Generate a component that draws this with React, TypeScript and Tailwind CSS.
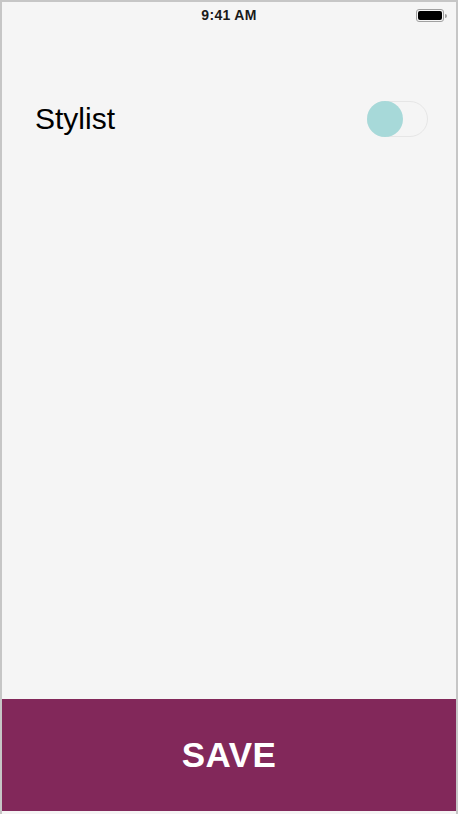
export default function App() {
  return (
    <div className="h-[814px] w-[458px] flex flex-col border-x-2 border-t-2 border-[#c6c6c6] bg-[#f5f5f5] font-['Liberation_Sans',Arial,sans-serif]">
      {/* Status bar */}
      <div className="relative h-[27px] flex items-center justify-center">
        <span className="text-[14px] font-bold text-[#1a1a1a] tracking-[0.3px]">9:41 AM</span>
        <div className="absolute right-[9px] top-[7px] flex items-center">
          <div className="w-[28px] h-[13px] rounded-[3px] border border-[#a0a0a0] p-[1px]">
            <div className="w-full h-full rounded-[2px] bg-black" />
          </div>
          <div className="w-[2px] h-[4px] ml-[1px] rounded-r-sm bg-[#a0a0a0]" />
        </div>
      </div>

      {/* Content */}
      <div className="flex-1">
        <div className="flex items-center justify-between pl-[33px] pr-[28px] mt-[72px]">
          <span className="text-[30px] leading-none text-black">Stylist</span>
          <button className="relative w-[61px] h-[36px] rounded-full border border-[#e6e6e6] bg-[#f5f5f5]">
            <span className="absolute left-[-1px] top-[-1px] w-[36px] h-[36px] rounded-full bg-[#a7d9d9]" />
          </button>
        </div>
      </div>

      {/* Save */}
      <button className="h-[112px] w-full bg-[#82285a] text-white text-[35px] font-bold tracking-[0.5px]">
        SAVE
      </button>
      <div className="h-[3px] bg-[#f5f5f5]" />
    </div>
  );
}
